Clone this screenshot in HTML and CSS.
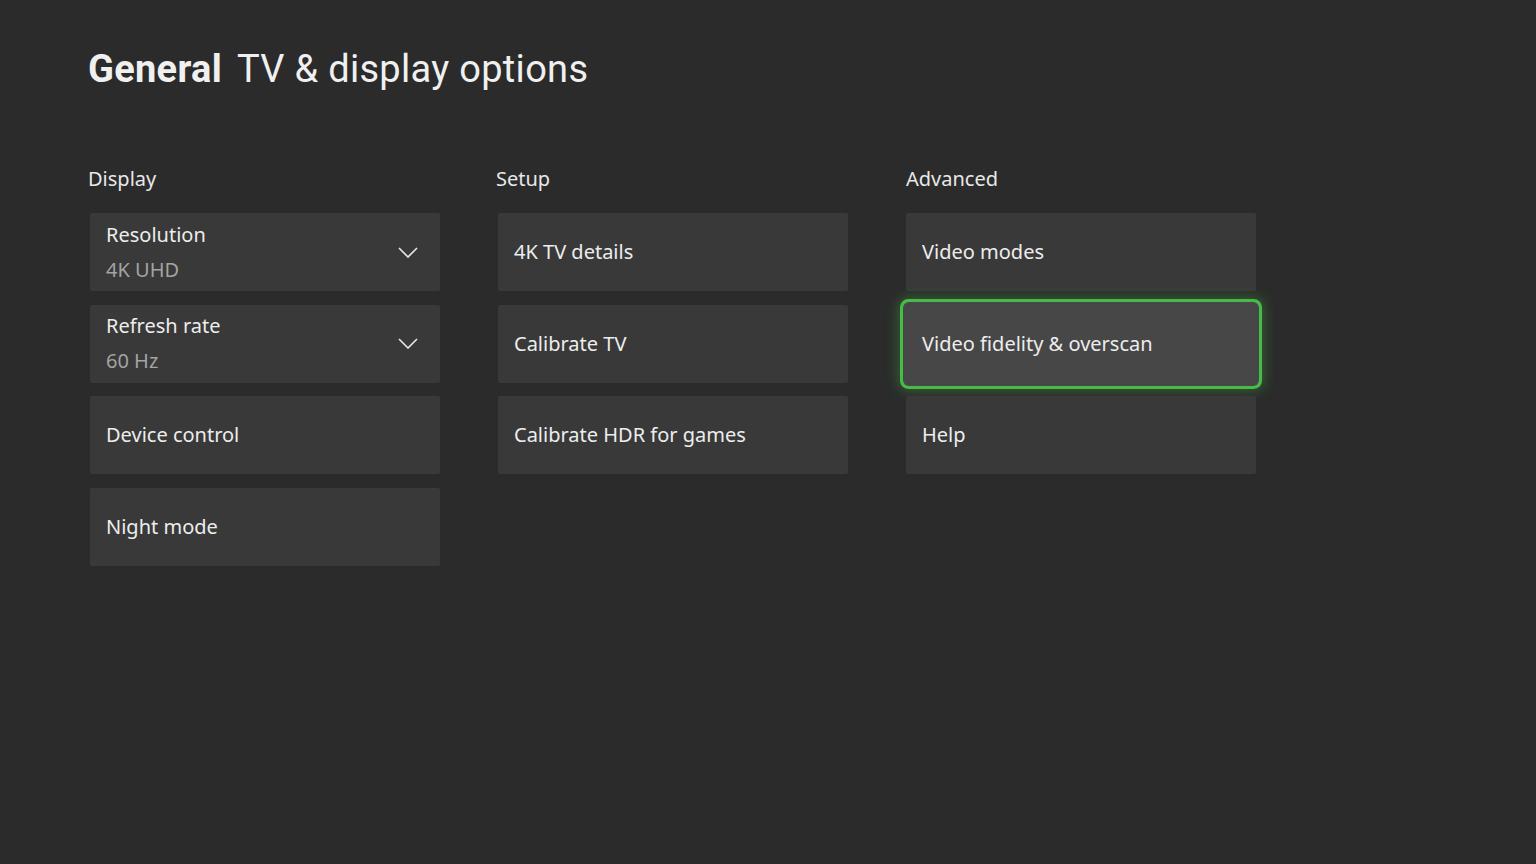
FILE: index.html
```html
<!DOCTYPE html>
<html lang="en">
<head>
<meta charset="utf-8">
<title>TV &amp; display options</title>
<link rel="stylesheet" href="styles.css">
</head>
<body>
<main class="page">
  <h1 class="title"><span class="title-strong">General</span> <span class="title-light">TV &amp; display options</span></h1>
  <div class="columns">
    <section class="column">
      <h2 class="col-label">Display</h2>
      <div class="tile tile-select">
        <div class="tile-text">
          <div class="tile-name">Resolution</div>
          <div class="tile-value">4K UHD</div>
        </div>
        <svg class="chevron" viewBox="0 0 20 11" width="20" height="11"><path d="M1 1 L10 10 L19 1" fill="none" stroke="#e8e8e8" stroke-width="1.6"/></svg>
      </div>
      <div class="tile tile-select">
        <div class="tile-text">
          <div class="tile-name">Refresh rate</div>
          <div class="tile-value">60 Hz</div>
        </div>
        <svg class="chevron" viewBox="0 0 20 11" width="20" height="11"><path d="M1 1 L10 10 L19 1" fill="none" stroke="#e8e8e8" stroke-width="1.6"/></svg>
      </div>
      <div class="tile"><div class="tile-name">Device control</div></div>
      <div class="tile"><div class="tile-name">Night mode</div></div>
    </section>
    <section class="column">
      <h2 class="col-label">Setup</h2>
      <div class="tile"><div class="tile-name">4K TV details</div></div>
      <div class="tile"><div class="tile-name">Calibrate TV</div></div>
      <div class="tile"><div class="tile-name">Calibrate HDR for games</div></div>
    </section>
    <section class="column">
      <h2 class="col-label col-label-adv">Advanced</h2>
      <div class="tile"><div class="tile-name">Video modes</div></div>
      <div class="tile tile-focused"><div class="tile-name">Video fidelity &amp; overscan</div></div>
      <div class="tile"><div class="tile-name">Help</div></div>
    </section>
  </div>
</main>
</body>
</html>
```

FILE: styles.css
```css
html, body {
  margin: 0;
  padding: 0;
  background: #2b2b2b;
  width: 1536px;
  height: 864px;
  overflow: hidden;
}

.page {
  padding: 44px 0 0 88px;
  font-family: "Noto Sans", "Open Sans", sans-serif;
  color: #ececec;
}

.title {
  margin: 0;
  font-family: "Roboto", "Noto Sans", sans-serif;
  font-size: 38px;
  line-height: 50px;
  font-weight: 400;
  letter-spacing: 0.3px;
  color: #f0f0f0;
  white-space: nowrap;
}

.title-strong {
  font-weight: 700;
  margin-right: 6px;
}

.columns {
  display: flex;
  gap: 56px;
  margin-top: 73px;
}

.column {
  width: 352px;
  display: flex;
  flex-direction: column;
  gap: 13.5px;
}

.col-label {
  margin: 0 0 8.5px 0;
  font-size: 20px;
  line-height: 24px;
  font-weight: 400;
  color: #e8e8e8;
}

.col-label-adv {
  margin-left: 2px;
}

.tile {
  margin-left: 2px;
  width: 350px;
  height: 78px;
  box-sizing: border-box;
  background: #393939;
  border-radius: 2px;
  display: flex;
  align-items: center;
  padding: 0 22px 0 16px;
}

.tile-select {
  justify-content: space-between;
}

.tile-text {
  display: flex;
  flex-direction: column;
  gap: 9px;
}

.tile-name {
  font-size: 20px;
  line-height: 26px;
  color: #ededed;
  white-space: nowrap;
}

.tile-value {
  font-size: 20px;
  line-height: 26px;
  color: #a3a3a3;
}

.chevron {
  display: block;
}

.tile-focused {
  background: #474747;
  border-radius: 3px;
  box-shadow: 0 0 0 3px #474747, 0 0 0 6px #46bb46, 0 0 14px 7px rgba(70, 190, 70, 0.4);
}
```
